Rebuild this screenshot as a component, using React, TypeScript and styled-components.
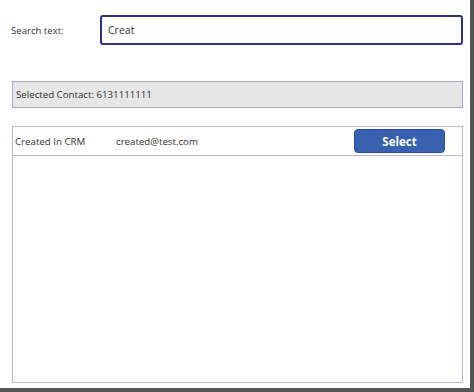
import React from 'react';
import styled, { createGlobalStyle } from 'styled-components';

const GlobalStyle = createGlobalStyle`
  html, body {
    margin: 0;
    padding: 0;
    background: #ffffff;
    overflow: hidden;
  }
  body {
    font-family: "Open Sans", "Noto Sans", sans-serif;
  }
`;

// screenshot frame: the dark right/bottom edge is the window shadow
const Frame = styled.div`
  width: 474px;
  height: 392px;
  box-sizing: border-box;
  background: #ffffff;
  border-right: 4px solid #555555;
  border-bottom: 4px solid #555555;
  padding: 15px 7px 5px 12px;
  display: flex;
  flex-direction: column;
`;

const SearchRow = styled.div`
  display: flex;
  align-items: center;
  height: 30px;
`;

const Label = styled.label`
  width: 89px;
  font-size: 9.6px;
  color: #333333;
  margin-left: -1px;
`;

const SearchInput = styled.input`
  flex: 1;
  height: 30px;
  box-sizing: border-box;
  border: 2px solid #2d3183;
  border-radius: 3px;
  padding: 0 6px;
  font-family: "Open Sans", "Noto Sans", sans-serif;
  font-size: 10.5px;
  color: #333333;
  outline: none;
`;

const SelectedBox = styled.div`
  margin-top: 36px;
  height: 27px;
  box-sizing: border-box;
  background: #e6e6e6;
  border: 1px solid #a7abcb;
  display: flex;
  align-items: center;
  padding: 0 3px;
  font-size: 9.7px;
  color: #333333;
`;

const Gallery = styled.div`
  margin-top: 18px;
  flex: 1;
  border: 1px solid #b4b8d6;
  display: flex;
  flex-direction: column;
`;

const GalleryRow = styled.div`
  height: 28px;
  border-bottom: 1px solid #b4b8d6;
  display: flex;
  align-items: center;
  padding: 0 17px 0 2px;
  font-size: 9.7px;
  color: #333333;
`;

const Cell = styled.span<{ $width?: number }>`
  width: ${(p) => (p.$width ? `${p.$width}px` : 'auto')};
  flex: ${(p) => (p.$width ? 'none' : '1')};
`;

const SelectButton = styled.button`
  width: 91px;
  height: 24px;
  border: 1px solid #2c4f9c;
  border-radius: 4px;
  background: #3961b0;
  color: #ffffff;
  font-family: "Open Sans", "Noto Sans", sans-serif;
  font-weight: 700;
  font-size: 11.5px;
  cursor: pointer;
`;

export default function App() {
  return (
    <>
      <GlobalStyle />
      <Frame>
        <SearchRow>
          <Label>Search text:</Label>
          <SearchInput defaultValue="Creat" />
        </SearchRow>
        <SelectedBox>Selected Contact: 6131111111</SelectedBox>
        <Gallery>
          <GalleryRow>
            <Cell $width={101}>Created In CRM</Cell>
            <Cell>created@test.com</Cell>
            <SelectButton>Select</SelectButton>
          </GalleryRow>
        </Gallery>
      </Frame>
    </>
  );
}
